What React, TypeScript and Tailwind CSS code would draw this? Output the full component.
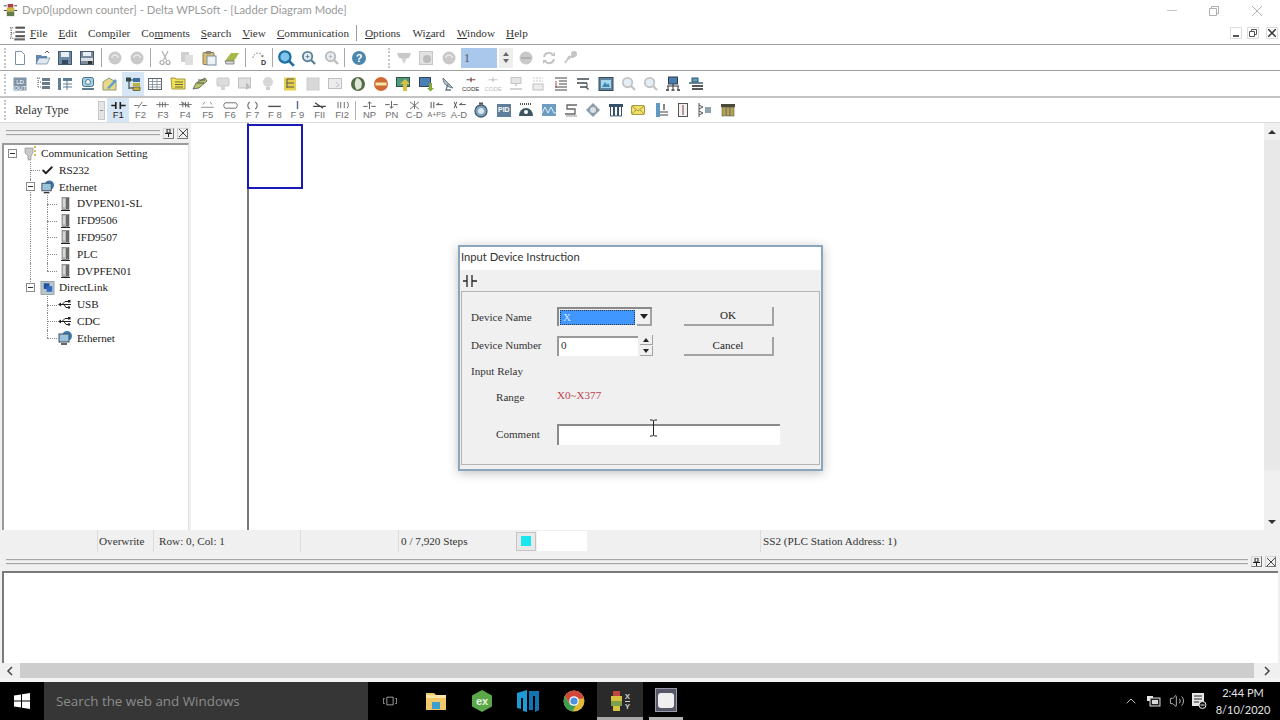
import type { ReactNode } from "react";
import { Check, ChevronUp, Volume2 } from "lucide-react";

const serif = "font-['Liberation_Serif',serif]";
const ui = "font-['Lato',sans-serif]";

function S({ children, size = 16 }: { children: ReactNode; size?: number }) {
  return (
    <svg width={size} height={size} viewBox="0 0 16 16" fill="none">
      {children}
    </svg>
  );
}

function Grip() {
  return <div className="ml-[4px] h-[20px] w-[2px] border-l-2 border-dotted border-[#c4c4c4]" />;
}

function Sep() {
  return (
    <div className="flex h-full w-[5px] items-center justify-center">
      <div className="h-[19px] w-px bg-[#a8a8a8]" />
    </div>
  );
}

function GreyCircle({ minus }: { minus?: boolean }) {
  return (
    <S>
      <circle cx="8" cy="8" r="6.5" fill="#c9c9c9" />
      {minus ? <rect x="3" y="7" width="10" height="2" fill="#b0b0b0" /> : <path d="M5 8a3 3 0 0 1 6 0" stroke="#e6e6e6" strokeWidth="1.5" />}
    </S>
  );
}

function Lens({ big, color, sign }: { big?: boolean; color: string; sign?: boolean }) {
  return (
    <S size={big ? 18 : 15}>
      <circle cx="7" cy="7" r="5" fill={big ? "#7fc4ee" : "#e4eef4"} stroke={color} strokeWidth="2" />
      <path d="M10.5 10.5 15 15" stroke={color} strokeWidth="2.4" />
      {sign && <path d="M5 7h4M7 5v4" stroke={color} strokeWidth="1" />}
    </S>
  );
}

const bar1: ReactNode[] = [
  <S key="new"><path d="M3.5 1.5h6l3 3v10h-9z" fill="#fff" stroke="#7d8fa3" /></S>,
  <S key="open"><path d="M1 14V5h5l1 1h5v8z" fill="#5f8ab0" /><path d="M1 14l3-6h11l-3 6z" fill="#dfe8ef" stroke="#56718a" strokeWidth=".6" /><path d="M10 3l2-2 2 2" stroke="#555" /></S>,
  <S key="save"><rect x="1.5" y="1.5" width="13" height="13" fill="#6f8aa5" stroke="#44586c" /><rect x="4" y="2" width="8" height="5" fill="#e8eef3" /><rect x="5" y="10" width="6" height="4" fill="#33495d" /></S>,
  <S key="saveas"><rect x="1.5" y="1.5" width="13" height="13" fill="#7b8b9b" stroke="#44586c" /><rect x="4" y="2" width="8" height="4" fill="#e8eef3" /><rect x="2" y="8" width="12" height="3" fill="#d7dee5" /><rect x="9" y="11" width="4" height="3" fill="#333" /></S>,
  "sep",
  <GreyCircle key="undo" />,
  <GreyCircle key="redo" />,
  "sep",
  <S key="cut"><path d="M5 1l4.5 9M11 1L6.5 10" stroke="#b5b5b5" strokeWidth="1.3" /><circle cx="5" cy="12.5" r="2" stroke="#aaa" strokeWidth="1.2" /><circle cx="11" cy="12.5" r="2" stroke="#aaa" strokeWidth="1.2" /></S>,
  <S key="copy"><rect x="2" y="2" width="8" height="10" fill="#cfcfcf" /><rect x="6" y="5" width="8" height="10" fill="#dedede" /></S>,
  <S key="paste"><rect x="2" y="2.5" width="11" height="12" rx="1" fill="#d8bd6e" stroke="#8a7b50" /><rect x="5" y="1" width="5" height="3" fill="#888" /><rect x="6" y="6" width="9" height="9" fill="#eef2f5" stroke="#7d8fa3" /></S>,
  <S key="erase"><path d="M1 11l6-8h8l-5 8z" fill="#a5b84a" /><path d="M1 11h9v3H2z" fill="#d9d9d9" stroke="#666" strokeWidth=".7" /></S>,
  "sep",
  <S key="dots"><path d="M2 8a5 5 0 0 1 8-4l2 3" stroke="#777" strokeDasharray="1.5 1.5" /><path d="M12 7l-2-.5 2.5-1.5z" fill="#555" /><text x="10" y="15" fontSize="7" fontWeight="700" fill="#333" fontFamily="Liberation Sans">D</text></S>,
  "sep",
  <Lens key="zoom" big color="#1f6f9f" />,
  <Lens key="zin" color="#5f8298" sign />,
  <Lens key="zout" color="#bcbcbc" sign />,
  "sep",
  <S key="help"><circle cx="8" cy="8" r="7" fill="#4b86ad" /><text x="8" y="12" textAnchor="middle" fontSize="11" fontWeight="700" fill="#fff" fontFamily="Liberation Sans">?</text></S>,
];

const bar1b: ReactNode[] = [
  <S key="funnel"><path d="M1 3h14l-2 5H3z" fill="#c8c8c8" /><path d="M5 8h6l-3 6z" fill="#d4d4d4" /></S>,
  <S key="box"><rect x="1.5" y="1.5" width="13" height="13" fill="#e2e2e2" stroke="#c6c6c6" /><circle cx="9" cy="9" r="4" fill="#bdbdbd" /></S>,
  <GreyCircle key="c3" />,
];

const bar1c: ReactNode[] = [
  <GreyCircle key="stop" minus />,
  <S key="cycle"><path d="M3 7a5 5 0 0 1 9-2M13 9a5 5 0 0 1-9 2" stroke="#c4c4c4" strokeWidth="2" /><path d="M10 6h4V2zM6 10H2v4z" fill="#c4c4c4" /></S>,
  <S key="arrow"><path d="M2 13l4-6h5" stroke="#c8c8c8" strokeWidth="2" /><circle cx="11" cy="4" r="3" fill="#c4c4c4" /><path d="M7 5v5l-3-2z" fill="#c4c4c4" /></S>,
];

function Net({ c = "#3c7cb0" }: { c?: string }) {
  return (
    <S>
      <circle cx="10" cy="6" r="5" fill={c} />
      <rect x="2" y="4" width="10" height="8" fill="#9cc3dc" stroke="#3f4e5c" />
      <path d="M4 14h6" stroke="#333" strokeWidth="1.5" />
    </S>
  );
}

function Code({ grey }: { grey?: boolean }) {
  const c = grey ? "#c0c0c0" : "#444";
  return (
    <div className="flex flex-col items-center leading-none">
      <S size={10}><path d="M1 6h5M10 6h5M8 2v8" stroke={c} strokeWidth="1.5" /><circle cx="8" cy="6" r="2" fill={grey ? "#ccc" : "#b54a4a"} /></S>
      <span className={`font-['Liberation_Sans',sans-serif] text-[6px] ${grey ? "text-[#bbb]" : "text-[#333]"}`}>CODE</span>
    </div>
  );
}

const bar2: ReactNode[] = [
  <S key="ld"><rect x="1.5" y="1.5" width="13" height="13" fill="#8094a8" /><text x="8" y="7.5" textAnchor="middle" fontSize="6" fill="#fff" fontFamily="Liberation Sans">LD</text><text x="8" y="14" textAnchor="middle" fontSize="6" fill="#fff" fontFamily="Liberation Sans">OUT</text></S>,
  <S key="tree1"><path d="M2 2h3M3 2v10M3 6h4M3 11h4" stroke="#666" strokeDasharray="1 1" /><rect x="7" y="2" width="8" height="3" fill="#6c7b88" /><rect x="7" y="6" width="8" height="3" fill="#6c7b88" /><rect x="7" y="10" width="8" height="3" fill="#6c7b88" /></S>,
  <S key="tree2"><rect x="1" y="2" width="3" height="12" fill="#5f7f98" /><rect x="6" y="2" width="9" height="3" fill="#5f7f98" /><path d="M6 8h9M6 11h9M10 5v9" stroke="#5f7f98" /></S>,
  <S key="monitor"><rect x="2.5" y="1.5" width="11" height="9" rx="2" fill="#9dcfe5" stroke="#4a7189" /><circle cx="8" cy="6" r="2.5" fill="#e8f4f8" stroke="#5d7c8e" /><path d="M2 13h12" stroke="#5d7c8e" strokeWidth="2" /></S>,
  <S key="pen"><path d="M1 14V6l6-4 7 4v8z" fill="#e9d985" stroke="#8f9a7a" /><path d="M5 12l8-9 2 2-8 8z" fill="#5fa0c8" /></S>,
  <S key="active"><path d="M4 3v10M4 4h4M4 12h4" stroke="#333" /><rect x="1" y="1.5" width="5" height="4" fill="#344" /><rect x="8" y="2" width="7" height="4" fill="#3e6d9e" /><rect x="8" y="7" width="7" height="3" fill="#c2b23a" /><rect x="8" y="11" width="7" height="3.5" fill="#c2b23a" stroke="#333" strokeWidth=".6" /></S>,
  <S key="table"><rect x="1.5" y="2.5" width="13" height="11" fill="#fff" stroke="#5c6670" /><path d="M1.5 5.5h13M1.5 8.5h13M1.5 11h13M5.5 3v10M10 3v10" stroke="#7d8993" strokeWidth=".8" /></S>,
  <S key="yellow"><path d="M1 2h4l1 1h9v10H2z" fill="#efe05a" stroke="#a7963c" /><path d="M5 6h8M5 8.5h8M5 11h8" stroke="#6e6a2d" /></S>,
  <S key="plug"><path d="M1 13l3-6 9-5 2 3-8 7z" fill="#b7c768" stroke="#555" strokeWidth=".8" /><path d="M6 4h7M5 7h7" stroke="#555" /></S>,
  <S key="g1"><rect x="2" y="2" width="12" height="8" rx="1" fill="#dcdcdc" stroke="#c8c8c8" /><rect x="6" y="10" width="4" height="4" fill="#d4d4d4" /></S>,
  <S key="g2"><rect x="1.5" y="2" width="12" height="10" fill="#e0e0e0" stroke="#c0c0c0" /><path d="M9 6v8l4-3z" fill="#bcbcbc" /></S>,
  <S key="g3"><circle cx="8" cy="6" r="5" fill="#d8d8d8" /><rect x="6" y="11" width="4" height="3" fill="#cfcfcf" /></S>,
  <S key="yellow2"><rect x="2" y="1.5" width="12" height="13" fill="#e8d04f" /><path d="M5 3h7M5 7h7M5 11h7M5 3v9" stroke="#555" /></S>,
  <S key="g4"><rect x="2" y="2" width="12" height="12" fill="#d8d8d8" stroke="#cecece" /></S>,
  <S key="g5"><rect x="1.5" y="2.5" width="13" height="10" fill="#ececec" stroke="#c0c0c0" /><path d="M9 6l3 3-3 2" stroke="#c0c0c0" /></S>,
  <S key="globe"><circle cx="8" cy="8" r="7" fill="#556b46" /><path d="M7 2c4 1 6 5 4 10l-4 2c-3-3-3-9 0-12z" fill="#dfe8d8" /></S>,
  <S key="noentry"><circle cx="8" cy="8" r="7" fill="#cf6a36" /><rect x="2.5" y="6.5" width="11" height="3" fill="#f2e6a8" /></S>,
  <S key="up"><rect x="1.5" y="1.5" width="13" height="9" fill="#4f9a7a" stroke="#33504a" /><path d="M8 15V8H5l5-5 5 5h-3v7z" fill="#d9c040" /></S>,
  <S key="down"><rect x="1.5" y="1.5" width="11" height="9" fill="#4a80b5" stroke="#33465a" /><path d="M11 7v5H9l3.5 3.5L16 12h-2V7z" fill="#84a83a" /></S>,
  <S key="dish"><path d="M3 2c0 6 4 9 10 10z" fill="#aebfc9" stroke="#677a86" /><path d="M8 8l-2 6h5" stroke="#677a86" strokeWidth="1.3" /></S>,
  <Code key="code" />,
  <Code key="code2" grey />,
  <S key="g6"><rect x="3" y="1.5" width="10" height="6" fill="#e5e5e5" stroke="#c6c6c6" /><path d="M8 8v2M2 13h12" stroke="#c6c6c6" strokeWidth="1.5" /></S>,
  <S key="g7"><path d="M3 2h10M3 5h10" stroke="#c8c8c8" strokeDasharray="2 1" /><rect x="3" y="8" width="10" height="6" fill="#ececec" stroke="#c0c0c0" /></S>,
  <S key="rows"><path d="M2 2h12M6 5h8M6 8h8M2 11h12M2 14h12" stroke="#444" /><path d="M3 5v7" stroke="#b54a4a" /></S>,
  <S key="rows2"><path d="M2 3h12M2 7h10M5 11h7" stroke="#3f4a52" strokeWidth="1.3" /><path d="M12 7v6h2" stroke="#3f4a52" /></S>,
  <S key="screen"><rect x="1" y="1.5" width="14" height="13" fill="#5e84a0" stroke="#3c4a55" /><rect x="3" y="4" width="10" height="8" fill="#a8d6ea" /><path d="M4 11l3-5 2 3 1-2 2 4z" fill="#3d87b5" /></S>,
  <Lens key="ms" color="#c4c4c4" />,
  <Lens key="ip" color="#c4c4c4" />,
  <S key="lan"><rect x="3.5" y="1" width="9" height="7" fill="#4a7cb0" stroke="#2f3f52" /><path d="M2 10h12M3 10v3M8 8v5M13 10v3" stroke="#333" /><path d="M1 14h3M6.5 14h3M12 14h3" stroke="#333" strokeWidth="1.5" /></S>,
  <S key="stack"><rect x="4" y="2" width="6" height="4" fill="#5fa0b8" stroke="#33566a" /><path d="M1 7h14" stroke="#3e6278" strokeWidth="1.5" /><path d="M4 10h11M4 13h11" stroke="#222" strokeWidth="1.5" /></S>,
];

const glyphs: Record<string, ReactNode> = {
  F1: <path d="M0 5h5M5 1v8M10 1v8M10 5h6" stroke="#222" strokeWidth="1.8" />,
  F2: <path d="M1 5h5M10 5h5M5 8l5-7" stroke="#666" />,
  F3: <path d="M1 4h14M5 1v6M8 1v6M11 1v6" stroke="#666" />,
  F4: <path d="M1 4h14M5 1v6M8 1v6M11 1v6M3 1l10 6" stroke="#666" />,
  F5: <path d="M1 7h14M5 1 3 4M11 1l2 3" stroke="#888" />,
  F6: <path d="M2 2h12M2 8h12M2 2c-2 2-2 4 0 6M14 2c2 2 2 4 0 6" stroke="#666" />,
  F7: <path d="M5 1c-3 2-3 6 0 8M11 1c3 2 3 6 0 8" stroke="#666" strokeWidth="1.2" />,
  F8: <path d="M1 6h14" stroke="#555" strokeWidth="1.6" />,
  F9: <path d="M8 0v9" stroke="#5a6d90" strokeWidth="1.6" />,
  FII: <path d="M1 6h14M3 2l9 6" stroke="#444" strokeWidth="1.3" />,
  FI2: <path d="M3 1v7M6 1v7M10 1v7M13 1c2 2 2 5 0 7" stroke="#666" />,
  NP: <path d="M1 6h5M10 6h5M8 1v8M6 3l2-2 2 2" stroke="#555" />,
  PN: <path d="M1 4h5M10 4h5M8 0v8M6 6l2 2 2-2" stroke="#555" />,
  CD: <path d="M8 0v9M3 1l10 8M13 1 3 9" stroke="#666" />,
  APS: <path d="M2 1v7M5 1v7M8 4h7M8 4l3-2" stroke="#444" />,
  AD: <path d="M2 1l3 7M5 1 2 8M8 4h7M8 4l3-2" stroke="#444" />,
};

function RelayKey({ k, label, on }: { k: string; label: string; on?: boolean }) {
  return (
    <div className="flex flex-col items-center leading-none">
      <svg width="15" height="9" viewBox="0 0 16 10" fill="none">{glyphs[k]}</svg>
      <span className={`font-['Liberation_Sans',sans-serif] leading-[9px] ${label.length > 3 ? "text-[7px]" : "text-[9.5px]"} ${on ? "text-[#222]" : "text-[#707070]"}`}>{label}</span>
    </div>
  );
}

const keys: [string, string][] = [
  ["F2", "F2"], ["F3", "F3"], ["F4", "F4"], ["F5", "F5"], ["F6", "F6"], ["F7", "F 7"],
  ["F8", "F 8"], ["F9", "F 9"], ["FII", "FII"], ["FI2", "FI2"],
];

const keys2: [string, string][] = [
  ["NP", "NP"], ["PN", "PN"], ["CD", "C-D"], ["APS", "A+PS"], ["AD", "A-D"],
];

const bar3: ReactNode[] = [
  <S key="timer"><circle cx="8" cy="9" r="6" fill="#7fa3bd" stroke="#44606f" strokeWidth="1.3" /><circle cx="8" cy="9" r="3" fill="#dce8ee" /><rect x="6" y="0.5" width="4" height="2" fill="#555" /></S>,
  <div key="pid" className="flex h-[13px] w-[14px] items-center justify-center bg-[#5f7e9c] font-['Liberation_Sans',sans-serif] text-[7px] font-bold text-white">PID</div>,
  <S key="gauge"><path d="M2 2h12" stroke="#555" strokeDasharray="1 1" strokeWidth="2" /><path d="M1 14a7 8 0 0 1 14 0z" fill="#3d5560" /><circle cx="8" cy="10" r="2" fill="#fff" /></S>,
  <S key="wave"><rect x="1" y="2" width="14" height="12" fill="#6c9cc0" /><path d="M1 11l3-6 3 6 3-6 3 6h2" stroke="#dff0fa" /></S>,
  <S key="s"><path d="M14 3H4v4h8v5H2" stroke="#666" strokeWidth="1.3" /><path d="M3 14h11" stroke="#999" /></S>,
  <S key="diamond"><path d="M8 1l7 7-7 7-7-7z" fill="#8b9ca8" /><circle cx="8" cy="8" r="3" fill="#d8e0e4" /></S>,
  <S key="cols"><rect x="1" y="2" width="14" height="3" fill="#37516a" /><path d="M2.5 5v9h3V5M6.5 5v9h3V5M10.5 5v9h3V5" stroke="#37516a" /></S>,
  <S key="mail"><rect x="1.5" y="3.5" width="13" height="9" rx="1" fill="#f0e06a" stroke="#a8983f" /><path d="M2 4l6 5 6-5M2 12l4-4M14 12l-4-4" stroke="#a8983f" /></S>,
  <S key="t"><rect x="3" y="1" width="4" height="14" fill="#5f9ac2" /><path d="M7 10h8M7 13h8" stroke="#444" /><path d="M11 2v6" stroke="#444" strokeWidth="1.3" /></S>,
  <S key="therm"><rect x="3.5" y="1.5" width="9" height="13" fill="#f2f2f2" stroke="#555" /><rect x="7" y="3" width="2" height="10" fill="#b89a9a" /></S>,
  <S key="flag"><path d="M2 1v14M2 3l4 2-4 2M2 9l4 2-4 2" stroke="#555" /><rect x="8" y="5" width="6" height="6" fill="#8fa3b0" /></S>,
  <S key="cols2"><rect x="1" y="2" width="14" height="3" fill="#4a4a3a" /><rect x="2" y="5" width="3.5" height="9" fill="#b5a24a" stroke="#444" strokeWidth=".5" /><rect x="6.3" y="5" width="3.5" height="9" fill="#b5a24a" stroke="#444" strokeWidth=".5" /><rect x="10.5" y="5" width="3.5" height="9" fill="#b5a24a" stroke="#444" strokeWidth=".5" /></S>,
];

function TinyButton({ children }: { children: ReactNode }) {
  return (
    <div className="flex h-[11px] w-[11px] items-center justify-center border border-[#d4d4d4] border-r-[#777] border-b-[#777] bg-[#f0f0f0]">
      {children}
    </div>
  );
}

const PinIcon = (
  <svg width="7" height="8" viewBox="0 0 7 8" fill="none"><path d="M2 0h3v4H2zM0 4.5h7M3.5 5v3" stroke="#222" /></svg>
);
const CrossIcon = (
  <svg width="8" height="8" viewBox="0 0 8 8" fill="none"><path d="M0 0l8 8M8 0 0 8" stroke="#444" /></svg>
);

function DockGrip() {
  return (
    <div className="flex flex-1 flex-col gap-[2px]">
      <div className="h-[2px] border-y border-[#a5a5a5] border-b-[#e5e5e5]" />
      <div className="h-[2px] border-y border-[#a5a5a5] border-b-[#e5e5e5]" />
    </div>
  );
}

function PlcIcon() {
  return (
    <svg width="9" height="14" viewBox="0 0 9 14" fill="none">
      <rect x="1" y="0.5" width="7" height="12" fill="#b8b8b8" stroke="#666" strokeWidth=".6" />
      <rect x="5" y="1" width="3" height="11" fill="#6a6a6a" />
      <path d="M2 3h2M2 5h2M2 7h2M2 9h2" stroke="#f5f5f5" />
      <path d="M0 13.5h9" stroke="#222" />
    </svg>
  );
}

function UsbIcon() {
  return (
    <svg width="14" height="9" viewBox="0 0 14 9" fill="none">
      <path d="M1 4.5h12M4 4.5l3-3h3M6 4.5l2 3h2" stroke="#222" />
      <path d="M0 4.5l3-2v4z" fill="#222" />
      <rect x="10" y="0" width="2.5" height="2.5" fill="#222" />
      <circle cx="11" cy="7.5" r="1.2" fill="#222" />
    </svg>
  );
}

function Expander() {
  return (
    <div className="z-10 flex h-[9px] w-[9px] items-center justify-center border border-[#8a8a8a] bg-white">
      <div className="h-px w-[5px] bg-[#333]" />
    </div>
  );
}

// one indent column of the tree: optional vertical guide, optional stub to the right
function Guide({ w, line, half, stub }: { w: number; line?: boolean; half?: boolean; stub?: boolean }) {
  return (
    <div style={{ width: w }} className="relative h-full shrink-0">
      {line && <div className={`absolute left-0 top-0 border-l border-dotted border-[#8a8a8a] ${half ? "h-1/2" : "h-full"}`} />}
      {stub && <div className="absolute left-0 top-1/2 w-full border-t border-dotted border-[#8a8a8a]" />}
    </div>
  );
}

function TreeRow({ children, label, gutter }: { children: ReactNode; label: string; gutter: ReactNode }) {
  return (
    <div className={`flex h-[16.8px] items-center ${serif} text-[11.2px] text-[#222]`}>
      {gutter}
      {children}
      <span className="whitespace-nowrap">{label}</span>
    </div>
  );
}

function Leaf({ label, last, icon, parentLine }: { label: string; last?: boolean; icon: ReactNode; parentLine: boolean }) {
  return (
    <TreeRow
      label={label}
      gutter={
        <>
          <Guide w={17} line={parentLine} />
          <Guide w={10} line half={last} stub />
        </>
      }
    >
      <div className="mr-[4px] flex w-[16px] justify-center">{icon}</div>
    </TreeRow>
  );
}

function Tree() {
  return (
    <div className="pl-[4px]">
      <TreeRow
        label="Communication Setting"
        gutter={
          <div className="flex w-[14px] items-center">
            <Expander />
          </div>
        }
      >
        <div className="mr-[3px] flex w-[16px] justify-center">
          <S>
            <path d="M3 3h8v5l-2 3v4H6v-4L3 8z" fill="#c8c8c8" stroke="#888" strokeWidth=".6" />
            <path d="M13 1v2M13 5v2M13 9v2" stroke="#c9a227" strokeWidth="1.5" />
          </S>
        </div>
      </TreeRow>
      <div className="pl-[22px]">
        <TreeRow label="RS232" gutter={<Guide w={10} line stub />}>
          <div className="mr-[5px] flex w-[14px] justify-center">
            <Check size={13} strokeWidth={3.5} className="text-[#222]" />
          </div>
        </TreeRow>
        <TreeRow
          label="Ethernet"
          gutter={
            <div className="relative flex h-full w-[10px] shrink-0 items-center">
              <Guide w={10} line />
              <div className="absolute left-[-4px]"><Expander /></div>
            </div>
          }
        >
          <div className="mr-[4px] flex w-[15px] justify-center"><Net /></div>
        </TreeRow>
        <Leaf parentLine label="DVPEN01-SL" icon={<PlcIcon />} />
        <Leaf parentLine label="IFD9506" icon={<PlcIcon />} />
        <Leaf parentLine label="IFD9507" icon={<PlcIcon />} />
        <Leaf parentLine label="PLC" icon={<PlcIcon />} />
        <Leaf parentLine last label="DVPFEN01" icon={<PlcIcon />} />
        <TreeRow
          label="DirectLink"
          gutter={
            <div className="relative flex h-full w-[10px] shrink-0 items-center">
              <Guide w={10} line half />
              <div className="absolute left-[-4px]"><Expander /></div>
            </div>
          }
        >
          <div className="mr-[4px] flex w-[15px] justify-center">
            <S>
              <rect x="1" y="1" width="14" height="14" fill="#b9c4cc" stroke="#7d8a94" strokeWidth=".7" />
              <rect x="4" y="3" width="6" height="6" fill="#1d4f9c" />
              <rect x="7" y="6" width="6" height="6" fill="#2d6cc0" />
            </S>
          </div>
        </TreeRow>
        <Leaf parentLine={false} label="USB" icon={<UsbIcon />} />
        <Leaf parentLine={false} label="CDC" icon={<UsbIcon />} />
        <Leaf parentLine={false} last label="Ethernet" icon={<Net />} />
      </div>
    </div>
  );
}

function ScrollArrow({ dir }: { dir: "up" | "down" | "left" | "right" }) {
  const d = { up: "M1 7 5 3l4 4z", down: "M1 3l4 4 4-4z", left: "M7 1 3 5l4 4", right: "M3 1l4 4-4 4" }[dir];
  const filled = dir === "up" || dir === "down";
  return (
    <svg width="10" height="10" viewBox="0 0 10 10" fill={filled ? "#333" : "none"} stroke={filled ? "none" : "#444"} strokeWidth="1.5">
      <path d={d} />
    </svg>
  );
}

function Win32Button({ label }: { label: string }) {
  return (
    <div className="flex h-[19px] w-[90px] items-center justify-center border-r-2 border-b-2 border-[#a3a3a3] bg-[#f0f0f0] text-[#222]">
      {label}
    </div>
  );
}

function Dialog() {
  return (
    <div className={`absolute left-[458px] top-[245px] h-[226px] w-[365px] border-2 border-[#8aa6bd] bg-[#f0f0f0] shadow-[0_2px_10px_rgba(0,0,0,0.25)] ${serif} text-[11.1px] text-[#333]`}>
      <div className={`flex h-[23px] items-center bg-white pb-[2px] pl-[1px] ${ui} text-[11.2px] text-[#333]`}>
        Input Device Instruction
      </div>
      <div className="flex h-[21px] items-center pl-[2px]">
        <svg width="16" height="14" viewBox="0 0 16 14" fill="none">
          <path d="M1 7h4M5 1v12M10 1v12M10 7h5" stroke="#222" strokeWidth="1.3" />
        </svg>
      </div>
      <div className="mx-[1px] h-[174px] border border-[#b4b4b4] pl-[9px] pt-[14px]">
        <div className="flex h-[20px] items-center">
          <span className="w-[86px] pt-[2px]">Device Name</span>
          <div className="flex h-[19px] w-[95px] border-2 border-[#8a8a8a] border-r-0 border-b-0">
            <div className="m-px flex w-[76px] items-center border border-dotted border-[#333] bg-[#3f97ff] pl-[2px] text-[#cfe3ff]">X</div>
            <div className="ml-[1px] flex w-[15px] items-center justify-center border-r-2 border-b-2 border-[#a3a3a3] bg-[#f0f0f0]">
              <svg width="8" height="5" viewBox="0 0 8 5"><path d="M0 0h8L4 5z" fill="#222" /></svg>
            </div>
          </div>
          <div className="ml-[32px]"><Win32Button label="OK" /></div>
        </div>
        <div className="mt-[9px] flex h-[21px] items-center">
          <span className="w-[86px]">Device Number</span>
          <div className="flex h-[20px] w-[81px] items-center border-l-2 border-t-2 border-[#9a9a9a] bg-white pb-[2px] pl-[2px]">0</div>
          <div className="ml-[2px] flex h-[21px] w-[13px] flex-col gap-px">
            <div className="flex flex-1 items-center justify-center border-r border-b border-[#a3a3a3]">
              <svg width="6" height="4" viewBox="0 0 6 4"><path d="M0 4h6L3 0z" fill="#222" /></svg>
            </div>
            <div className="flex flex-1 items-center justify-center border-r border-b border-[#a3a3a3]">
              <svg width="6" height="4" viewBox="0 0 6 4"><path d="M0 0h6L3 4z" fill="#222" /></svg>
            </div>
          </div>
          <div className="ml-[31px] mt-[2px] self-start"><Win32Button label="Cancel" /></div>
        </div>
        <div className="mt-[5px] leading-[20px]">Input Relay</div>
        <div className="mt-[6px] flex h-[20px] items-center pl-[25px]">
          <span className="w-[61px] pt-[1px]">Range</span>
          <span className="pb-[4px] text-[#c0414f]">X0~X377</span>
        </div>
        <div className="mt-[16px] flex h-[22px] items-center pl-[25px]">
          <span className="w-[61px] pt-[1px]">Comment</span>
          <div className="h-[21px] w-[223px] border-l-2 border-t-2 border-[#8a8a8a] bg-white" />
        </div>
      </div>
      <svg className="absolute left-[189px] top-[172px]" width="9" height="18" viewBox="0 0 9 18" fill="none">
        <path d="M1 1h2.5L4.5 2 5.5 1H8M1 17h2.5l1-1 1 1H8M4.500 2v14" stroke="#222" />
      </svg>
    </div>
  );
}

export default function App() {
  return (
    <div className="relative flex h-[720px] w-[1280px] flex-col overflow-hidden bg-[#f0f0f0]">
      {/* title bar */}
      <div className={`flex h-[21px] items-center bg-white ${ui} text-[11.25px] text-[#9a9a9a]`}>
        <div className="ml-[3px] mr-[4px] flex w-[15px] justify-center">
          <S size={17}>
            <rect x="5" y="1" width="6" height="4" fill="#a44" />
            <rect x="4" y="5" width="8" height="4" fill="#c9b53a" />
            <rect x="4" y="9" width="8" height="5" fill="#667a4a" />
            <path d="M1 3h3M1 8h3M12 3h3M12 8h3" stroke="#333" />
          </S>
        </div>
        <span className="whitespace-nowrap">Dvp0[updown counter] - Delta WPLSoft - [Ladder Diagram Mode]</span>
        <div className="ml-auto flex items-center">
          <div className="h-px w-[10px] bg-[#c4c4c4]" />
          <div className="ml-[32px] h-[10px] w-[10px]">
            <svg width="10" height="10" viewBox="0 0 10 10" fill="none" stroke="#b0b0b0"><path d="M0.5 2.5h7v7h-7zM2.5 2.5v-2h7v7h-2" /></svg>
          </div>
          <div className="ml-[33px] mr-[18px]">
            <svg width="10" height="10" viewBox="0 0 10 10" fill="none" stroke="#b0b0b0"><path d="M0 0l10 10M10 0 0 10" /></svg>
          </div>
        </div>
      </div>

      {/* menu bar */}
      <div className={`flex h-[24px] items-center border-b border-[#a0a0a0] bg-white pt-[1px] ${serif} text-[11.2px] text-[#333]`}>
        <div className="ml-[9px] mr-[3px] flex w-[17px] justify-center">
          <S size={18}>
            <path d="M1 3h4M2 3v10M1 13h4M2 8h3" stroke="#555" strokeDasharray="1 1" />
            <rect x="6" y="2" width="9" height="2" fill="#555" />
            <rect x="6" y="6" width="9" height="2" fill="#777" />
            <rect x="6" y="10" width="9" height="2" fill="#555" />
            <rect x="5" y="13" width="10" height="2" fill="#666" />
          </S>
        </div>
        <span className="ml-[1px]"><u>F</u>ile</span>
        <span className="ml-[11px]"><u>E</u>dit</span>
        <span className="ml-[11px]">Com<u>p</u>iler</span>
        <span className="ml-[11px]">Co<u>m</u>ments</span>
        <span className="ml-[11px]"><u>S</u>earch</span>
        <span className="ml-[11px]"><u>V</u>iew</span>
        <span className="ml-[11px]"><u>C</u>ommunication</span>
        <div className="ml-[7px] h-[16px] w-px bg-[#9a9a9a]" />
        <span className="ml-[8px]"><u>O</u>ptions</span>
        <span className="ml-[12px]">Wi<u>z</u>ard</span>
        <span className="ml-[12px]"><u>W</u>indow</span>
        <span className="ml-[11px]"><u>H</u>elp</span>
        <div className="ml-auto mr-[2px] flex items-center gap-[5px]">
          <div className="flex h-[12px] w-[12px] items-end justify-center border border-[#dcdcdc] pb-[1px]"><div className="h-[2px] w-[6px] bg-[#555]" /></div>
          <div className="flex h-[12px] w-[12px] items-center justify-center border border-[#dcdcdc]">
            <svg width="8" height="8" viewBox="0 0 8 8" fill="none" stroke="#555"><path d="M.5 2.5h5v5h-5zM2.5 2.5v-2h5v5h-2" /></svg>
          </div>
          <div className="ml-[2px] flex h-[12px] w-[12px] items-center justify-center border border-[#dcdcdc]">
            <svg width="8" height="8" viewBox="0 0 8 8" fill="none" stroke="#333" strokeWidth="1.5"><path d="M0 0l8 8M8 0 0 8" /></svg>
          </div>
        </div>
      </div>

      {/* toolbar 1 */}
      <div className="flex h-[26px] items-center border-b border-[#a0a0a0] bg-white">
        <Grip />
        <div className="w-[3px]" />
        {bar1.map((item, i) =>
          item === "sep" ? <Sep key={i} /> : <div key={i} className="flex w-[22.4px] justify-center">{item}</div>
        )}
        <div className="w-[18px]" />
        <div className="h-[20px] w-[2px] border-l-2 border-dotted border-[#c8c8c8]" />
        <div className="w-[3px]" />
        {bar1b.map((item, i) => (
          <div key={i} className="flex w-[22.4px] justify-center">{item}</div>
        ))}
        <div className={`ml-[1px] flex h-[20px] w-[36px] items-center bg-[#a9c8ec] pl-[3px] ${serif} text-[12px] text-[#555]`}>1</div>
        <div className="ml-[2px] flex h-[20px] w-[14px] flex-col items-center justify-center gap-[3px] bg-[#eeeeee]">
          <svg width="6" height="4" viewBox="0 0 6 4"><path d="M0 4h6L3 0z" fill="#666" /></svg>
          <svg width="6" height="4" viewBox="0 0 6 4"><path d="M0 0h6L3 4z" fill="#666" /></svg>
        </div>
        <div className="w-[2px]" />
        {bar1c.map((item, i) => (
          <div key={i} className="flex w-[22.4px] justify-center">{item}</div>
        ))}
      </div>

      {/* toolbar 2 */}
      <div className="flex h-[27px] items-center border-b-2 border-[#c4c4c4] bg-white">
        <Grip />
        <div className="w-[3px]" />
        {bar2.map((item, i) => (
          <div key={i} className={`flex h-[24px] w-[22.53px] items-center justify-center ${i === 5 ? "bg-[#d6e6f4]" : ""}`}>{item}</div>
        ))}
      </div>

      {/* toolbar 3 */}
      <div className="flex h-[25px] items-center border-b border-[#dcdcdc] bg-white">
        <Grip />
        <span className={`ml-[9px] w-[83px] pt-[2px] ${serif} text-[11.8px] text-[#333]`}>Relay Type</span>
        <div className="flex h-[19px] w-[7px] items-center justify-center border border-[#c8c8c8] bg-[#e4e4e4] text-[7px] leading-none text-[#555]">~</div>
        <div className="ml-[2px] flex h-[24px] w-[22.4px] items-center justify-center bg-[#d6e6f4]">
          <RelayKey k="F1" label="F1" on />
        </div>
        {keys.map(([k, label]) => (
          <div key={k} className="flex w-[22.4px] justify-center"><RelayKey k={k} label={label} /></div>
        ))}
        <div className="flex h-full w-[5px] items-center justify-center"><div className="h-[19px] w-px bg-[#b5b5b5]" /></div>
        {keys2.map(([k, label]) => (
          <div key={k} className="flex w-[22.4px] justify-center"><RelayKey k={k} label={label} /></div>
        ))}
        {bar3.map((item, i) => (
          <div key={i} className="flex w-[22.4px] justify-center">{item}</div>
        ))}
      </div>

      {/* main area */}
      <div className="flex h-[407px] bg-white">
        <div className="flex w-[191px] shrink-0 flex-col bg-[#f0f0f0] pl-[2px] pr-[2px]">
          <div className="flex h-[20px] shrink-0 items-center gap-[3px] pl-[4px] pr-[1px]">
            <DockGrip />
            <TinyButton>{PinIcon}</TinyButton>
            <TinyButton>{CrossIcon}</TinyButton>
          </div>
          <div className="flex-1 border-l-2 border-t-2 border-[#9a9a9a] border-r border-r-[#e0e0e0] bg-white">
            <Tree />
          </div>
        </div>
        <div className="flex flex-1 pl-[56px]">
          <div className="flex-1 border-l-2 border-[#7a7a7a]">
            <div className="-ml-[2px] mt-[1px] h-[65px] w-[56px] border-2 border-[#1a1ab8]" />
          </div>
          <div className="flex w-[16px] shrink-0 flex-col bg-[#f0f0f0]">
            <div className="flex h-[17px] items-center justify-center"><ScrollArrow dir="up" /></div>
            <div className="h-[330px] bg-[#e8e8e8]" />
            <div className="flex-1" />
            <div className="flex h-[17px] items-center justify-center"><ScrollArrow dir="down" /></div>
          </div>
        </div>
      </div>

      {/* status bar */}
      <div className={`flex h-[22px] items-center bg-[#f0f0f0] ${serif} text-[11.2px] text-[#333]`}>
        <div className="h-full w-[98px] border-r border-[#dcdcdc]" />
        <div className="h-full w-[56px] border-r border-[#dcdcdc] pl-[1px] leading-[22px]">Overwrite</div>
        <div className="h-full w-[147px] border-r border-[#dcdcdc] pl-[5px] leading-[22px]">Row: 0, Col: 1</div>
        <div className="h-full w-[98px] border-r border-[#dcdcdc]" />
        <div className="h-full w-[117px] pl-[2px] leading-[22px]">0 / 7,920 Steps</div>
        <div className="flex h-[19px] w-[20px] items-center justify-center border border-[#c4c4c4] bg-[#e8e8e8]">
          <div className="h-[10px] w-[10px] bg-[#19e6ef]" />
        </div>
        <div className="ml-[1px] h-[20px] w-[50px] bg-white" />
        <div className="h-full w-[173px]" />
        <div className="h-full flex-1 border-l border-[#dcdcdc] pl-[2px] leading-[22px]">SS2 (PLC Station Address: 1)</div>
      </div>

      {/* output dock */}
      <div className="flex h-[19px] items-center gap-[3px] pl-[6px] pr-[4px]">
        <DockGrip />
        <TinyButton>{PinIcon}</TinyButton>
        <TinyButton>{CrossIcon}</TinyButton>
      </div>
      <div className="mx-[2px] h-[92px] border-l-2 border-t-2 border-[#7a7a7a] bg-white" />
      <div className="flex h-[15px] items-center">
        <div className="flex w-[20px] justify-center"><ScrollArrow dir="left" /></div>
        <div className="h-full w-[1234px] bg-[#cdcdcd]" />
        <div className="flex flex-1 justify-center"><ScrollArrow dir="right" /></div>
      </div>
      <div className="h-[4px] bg-[#f4f4f4]" />

      {/* taskbar */}
      <div className="flex h-[38px] items-center bg-black">
        <div className="flex w-[44px] justify-center">
          <svg width="16" height="16" viewBox="0 0 16 16" fill="#fff">
            <path d="M0 2.5 7 1.5v6H0zM8 1.3 16 0v7.5H8zM0 8.5h7v6l-7-1zM8 8.5h8V16l-8-1.2z" />
          </svg>
        </div>
        <div className="flex h-full w-[324px] items-center bg-[#363636] pl-[12px] font-['Open_Sans',sans-serif] text-[13.4px] text-[#8c8c8c]">
          Search the web and Windows
        </div>
        <div className="ml-[15px] flex w-[14px] justify-center">
          <svg width="20" height="14" viewBox="0 0 20 14" fill="none" stroke="#d8d8d8">
            <path d="M5.5 1.5h9v11h-9zM2.5 3.5h-2v7h2M17.5 3.5h2v7h-2" />
          </svg>
        </div>
        <div className="ml-[16px] w-[46px]">
          <div className="flex justify-center">
            <svg width="20" height="19" viewBox="0 0 20 19">
              <path d="M0 1h8l2 2h10v15H0z" fill="#f0c868" />
              <rect x="0" y="3" width="20" height="3" fill="#fbe6a8" />
              <rect x="6" y="10" width="8" height="7" fill="#3d9fd0" />
            </svg>
          </div>
        </div>
        <div className="flex w-[46px] justify-center">
          <svg width="20" height="22" viewBox="0 0 20 22">
            <path d="M10 0l10 5.5v11L10 22 0 16.5v-11z" fill="#5ba84a" />
            <text x="10" y="15" textAnchor="middle" fontSize="11" fontWeight="700" fill="#e8f4e0" fontFamily="Liberation Sans">ex</text>
          </svg>
        </div>
        <div className="flex w-[46px] justify-center">
          <svg width="22" height="22" viewBox="0 0 22 22">
            <path d="M0 3l10-3v22l-4-1V8H4v11l-4-1z" fill="#1e9bd7" />
            <path d="M12 1h10v19l-4 2V6h-2v14h-4z" fill="#1275b0" />
          </svg>
        </div>
        <div className="flex w-[46px] justify-center">
          <svg width="22" height="22" viewBox="0 0 22 22">
            <circle cx="11" cy="11" r="10.5" fill="#e0b93a" />
            <path d="M11 .5A10.5 10.5 0 0 0 2 6l4.5 7.5L8 9l13-.5A10.5 10.5 0 0 0 11 .5z" fill="#d2473c" />
            <path d="M2 6a10.5 10.5 0 0 0 7.5 15.5L13 15l-6 0z" fill="#3e9e55" />
            <circle cx="11" cy="11" r="4.8" fill="#fff" />
            <circle cx="11" cy="11" r="3.6" fill="#4d8fe0" />
          </svg>
        </div>
        <div className="flex h-full w-[46px] flex-col items-center justify-between bg-[#2a2a2a]">
          <div className="mt-[8px] flex items-center">
            <svg width="13" height="22" viewBox="0 0 13 22">
              <rect x="3" y="1" width="7" height="5" fill="#c0453c" />
              <rect x="1" y="6" width="11" height="5" fill="#d9c23f" />
              <rect x="1" y="11" width="11" height="5" fill="#7ea04a" />
              <rect x="3" y="16" width="7" height="5" fill="#d9c23f" />
            </svg>
            <div className="ml-[2px] flex flex-col items-center font-['Liberation_Sans',sans-serif] text-[8px] font-bold leading-[9px] text-[#cccccc]">
              <span>X</span><span className="h-px w-[5px] bg-[#ccc]" /><span>Y</span>
            </div>
          </div>
          <div className="h-[3px] w-full bg-[#a8a8a8]" />
        </div>
        <div className="ml-[6px] flex h-full w-[34px] flex-col items-center justify-between">
          <div className="mt-[6px] flex h-[24px] w-[22px] items-center justify-center border border-[#9a9aa8] bg-[#57576a]">
            <div className="h-[15px] w-[16px] rounded-[3px] bg-[#efefef]" />
          </div>
          <div className="h-[3px] w-full bg-[#b5b5b5]" />
        </div>
        <div className="ml-auto flex items-center text-[#e0e0e0]">
          <ChevronUp size={16} strokeWidth={1.3} />
          <div className="ml-[8px] flex w-[14px] justify-center">
            <svg width="14" height="12" viewBox="0 0 14 12">
              <rect x="0" y="1" width="6" height="5" fill="#e8e8e8" />
              <rect x="3" y="3" width="10" height="8" fill="#222" stroke="#d8d8d8" />
              <rect x="5" y="5" width="6" height="4" fill="#d8d8d8" />
            </svg>
          </div>
          <Volume2 size={16} strokeWidth={1.2} className="ml-[8px]" />
          <div className="ml-[6px] w-[14px]">
            <svg width="16" height="18" viewBox="0 0 16 18" fill="none">
              <path d="M1 1h12v13H1z" fill="#e8e8e8" />
              <path d="M3 4h8M3 7h8M3 10h5" stroke="#222" />
              <circle cx="11.5" cy="13" r="3.5" fill="#111" stroke="#e8e8e8" />
              <path d="M9.5 13h4" stroke="#e8e8e8" />
            </svg>
          </div>
          <div className={`ml-[8px] mr-[7px] flex w-[60px] flex-col items-center ${ui} text-[11px] leading-[17px] text-[#e4e4e4]`}>
            <span>2:44 PM</span>
            <span>8/10/2020</span>
          </div>
        </div>
      </div>

      <Dialog />
    </div>
  );
}
